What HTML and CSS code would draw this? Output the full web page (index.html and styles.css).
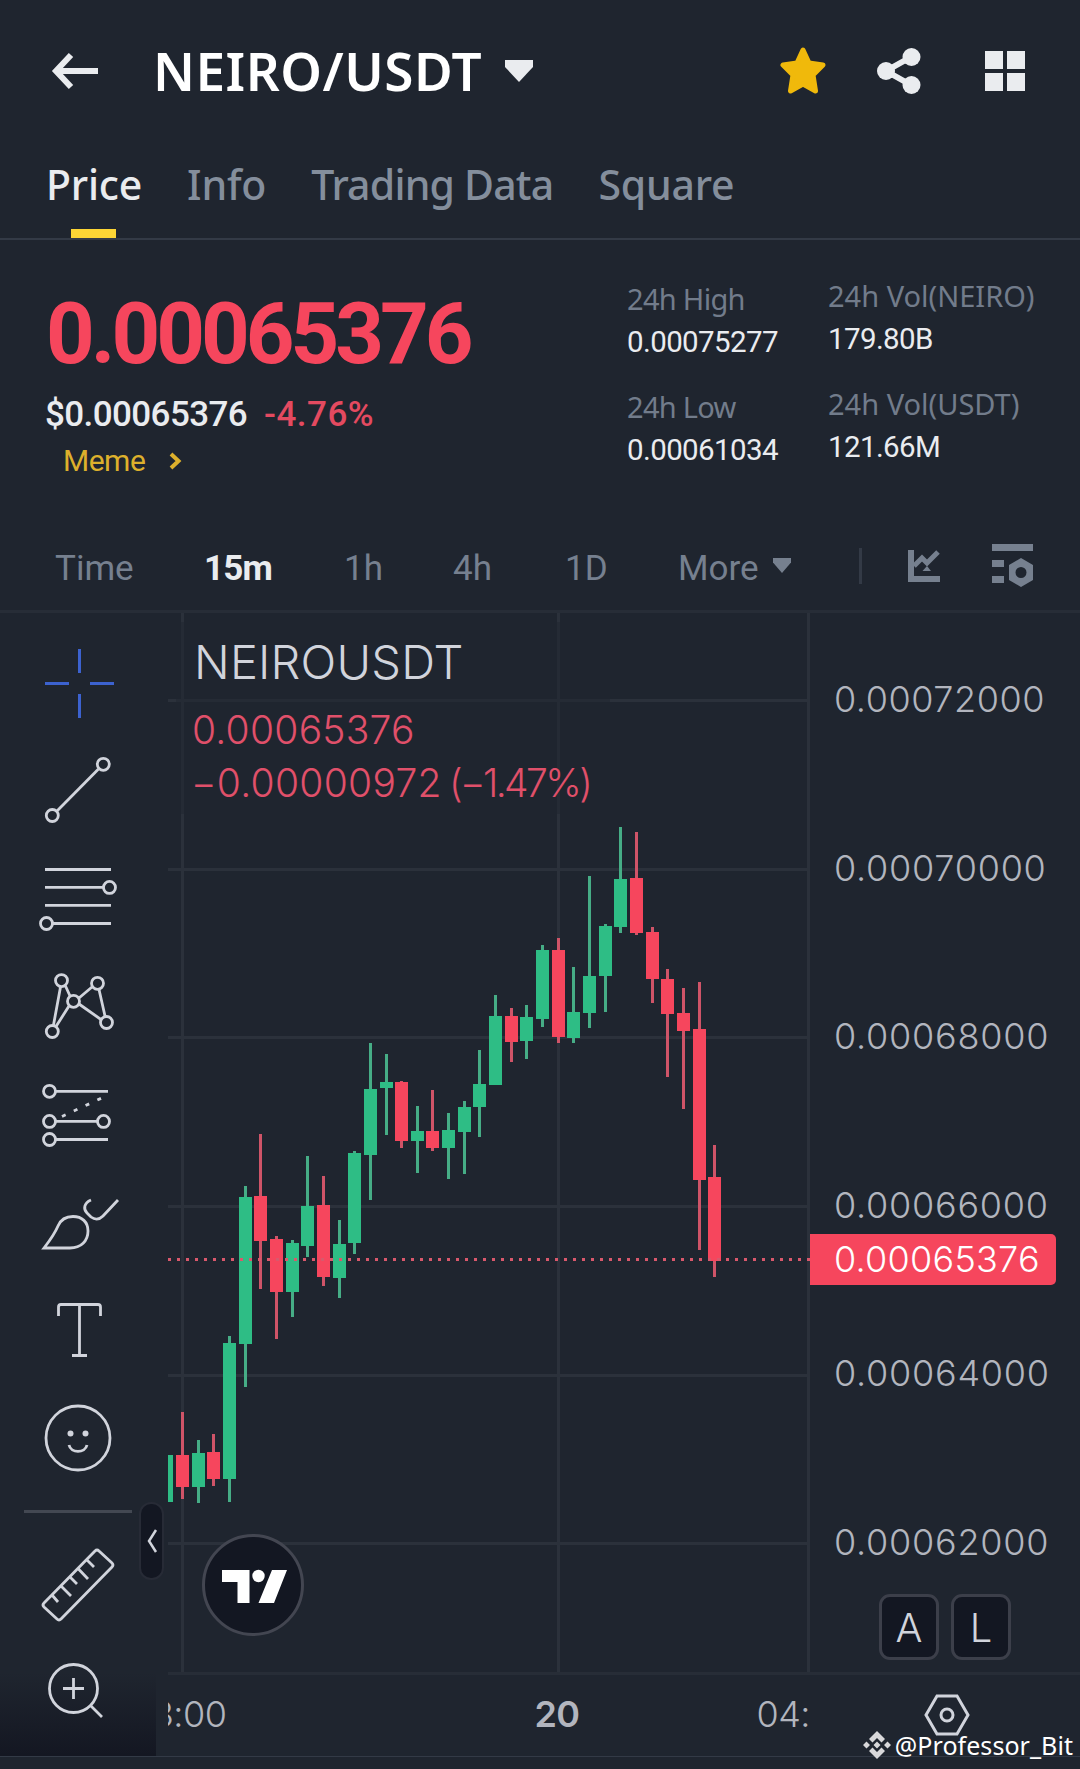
FILE: index.html
```html
<!DOCTYPE html>
<html lang="en">
<head>
    <meta charset="utf-8">
    <meta name="viewport" content="width=device-width, initial-scale=1.0">
    <title>NEIRO/USDT</title>
    <link rel="stylesheet" href="styles.css">
</head>
<body>
    <header class="header">
        <svg class="back" width="48" height="40" viewBox="0 0 48 40"><path d="M47 20H6M20 4L5 20L20 36" /></svg>
        <h1 class="pair">NEIRO/USDT</h1>
        <svg class="caret" width="28" height="22" viewBox="0 0 28 22"><path d="M0 0H28V7L14 22L0 7Z" /></svg>
        <div class="actions">
            <svg width="46" height="48" viewBox="0 0 46 48"><path class="star" d="M23 3L29 16L43 18L33 28L35.500 44L23 37L10.500 44L13 28L3 18L17 16Z" /></svg>
            <svg width="44" height="48" viewBox="0 0 44 48">
                <path class="share-line" d="M34 10L9 24L34 38" />
                <circle cx="34.500" cy="10" r="9" /><circle cx="9" cy="24" r="9" /><circle cx="34.500" cy="38" r="9" />
            </svg>
            <svg width="40" height="40" viewBox="0 0 40 40"><path d="M0 0H18V18H0ZM22 0H40V18H22ZM0 22H18V40H0ZM22 22H40V40H22Z" /></svg>
        </div>
    </header>

    <nav class="tabs">
        <a class="tab active">Price</a>
        <a class="tab info">Info</a>
        <a class="tab trading">Trading Data</a>
        <a class="tab">Square</a>
    </nav>

    <section class="summary">
        <div class="main-price">
            <div class="last">0.00065376</div>
            <div class="fiat"><span>$0.00065376</span><span class="change">-4.76%</span></div>
            <div class="tag">Meme <svg width="14" height="18" viewBox="0 0 14 18"><path d="M3 2L10.500 9L3 16" /></svg></div>
        </div>
        <div class="stats range">
            <div class="stat"><span class="label">24h High</span><span class="value">0.00075277</span></div>
            <div class="stat"><span class="label">24h Low</span><span class="value">0.00061034</span></div>
        </div>
        <div class="stats volume">
            <div class="stat"><span class="label">24h Vol(NEIRO)</span><span class="value">179.80B</span></div>
            <div class="stat"><span class="label">24h Vol(USDT)</span><span class="value">121.66M</span></div>
        </div>
    </section>

    <div class="intervals">
        <span>Time</span>
        <span class="selected">15m</span>
        <span>1h</span>
        <span>4h</span>
        <span>1D</span>
        <span>More</span>
        <svg class="more-caret" width="18" height="15" viewBox="0 0 18 15"><path d="M0 0H18V4.500L9 15L0 4.500Z" /></svg>
        <i class="separator"></i>
        <svg width="34" height="34" viewBox="0 0 34 34">
            <path d="M1 1H7V27H33V33H1Z" />
            <path class="thick" d="M7 17L15 9L20 14L31 3" />
            <path d="M20 17L24 22H15.500Z" />
        </svg>
        <svg width="42" height="44" viewBox="0 0 42 44">
            <path d="M0 0H41V7H0ZM0 16H12V23H0ZM0 32H12V39H0Z" />
            <path fill-rule="evenodd" d="M29 14L41 21V36L29 43L17 36V21ZM29 23A5.500 5.500 0 1 0 29 34A5.500 5.500 0 1 0 29 23Z" />
        </svg>
    </div>

    <main class="chart">
        <aside class="tools">
            <svg class="cross" viewBox="0 0 108 108"><path d="M21 54.500H45M66 54.500H90M55.500 20V44M55.500 65V89" /></svg>
            <svg viewBox="0 0 108 108"><path d="M33 74L74.500 32" /><circle cx="28.300" cy="78.500" r="6" /><circle cx="79.300" cy="27.300" r="6" /></svg>
            <svg viewBox="0 0 108 108"><path d="M21 24.500H87M21 42.400H79M21 60.400H87M29 78.500H87" /><circle cx="85.500" cy="42.400" r="6" /><circle cx="22.500" cy="78.500" r="6" /></svg>
            <svg viewBox="0 0 108 108">
                <path d="M36.500 34L29.500 72M41.500 33L46 43M45 53L32 73.500M55 45L68 34M55 51L77 66.500M75 36.500L81 63" />
                <circle cx="37.500" cy="27.600" r="6" /><circle cx="73.500" cy="30.300" r="6" /><circle cx="49.500" cy="48.300" r="6" /><circle cx="28.300" cy="78.500" r="6" /><circle cx="82.500" cy="69.500" r="6" />
            </svg>
            <svg viewBox="0 0 108 108">
                <path d="M32 30.300H84M32 60.400H73M32 78.500H84" /><path class="dashed" d="M38 55.500L80 36" />
                <circle cx="25.500" cy="30.300" r="6" /><circle cx="25.500" cy="60.400" r="6" /><circle cx="79.500" cy="60.400" r="6" /><circle cx="25.500" cy="78.500" r="6" />
            </svg>
            <svg viewBox="0 0 108 108"><path d="M20 79C27 70 31 64 34 57C37 50 42 47.500 49 47.500C58 47.500 64 53 64 62C64 72 57 79 46 79ZM67 31C60 34 59 40 63 44L67 48C71 51 75 51 79 47L94 31" /></svg>
            <svg viewBox="0 0 108 108"><path d="M34.500 39V30Q34.500 27.500 37 27.500H74Q76.500 27.500 76.500 30V39M55.500 28V78.500M48 78.500H63" /></svg>
            <svg viewBox="0 0 108 108"><circle cx="54" cy="53" r="32" /><circle class="dot" cx="46.500" cy="48.500" r="3" /><circle class="dot" cx="61.500" cy="48.500" r="3" /><path d="M45 60C47 68.500 61 68.500 63 60" /></svg>
            <hr class="tools-divider">
            <svg viewBox="0 0 108 108"><path d="M71 20Q73 18 75 20L88 32Q90 34 88 36L37 88Q35 90 33 88L20 76Q18 74 20 72ZM28 64L34 71M37 55L47 65M46 46L53 53M54 37.500L64 48M63 29L70 36" /></svg>
            <svg viewBox="0 0 108 108"><circle cx="49.500" cy="49.500" r="24" /><path d="M39 49.500H60M49.500 39V60M67 67L78 78" /></svg>
        </aside>

        <div class="plot">
            <svg id="candles" width="642" height="1059" viewBox="168 614 642 1059"></svg>
            <div class="legend">
                <div class="symbol">NEIROUSDT</div>
                <div class="legend-price">0.00065376</div>
                <div class="legend-change">−0.00000972 <span>(−1.47%)</span></div>
            </div>
            <svg class="tv-logo" width="104" height="104" viewBox="0 0 104 104">
                <circle class="ring" cx="52" cy="52" r="49.500" />
                <path d="M21 37H48.500V70H36.500V49H21ZM71 37H86L73 70H57.500Z" /><circle cx="57.500" cy="43" r="6.200" />
            </svg>
        </div>

        <div class="price-axis">
            <span class="narrow">0.00072000</span>
            <span>0.00070000</span>
            <span>0.00068000</span>
            <span>0.00066000</span>
            <span>0.00064000</span>
            <span>0.00062000</span>
            <div class="last-tag">0.00065376</div>
            <div class="scale-buttons"><b>A</b><b>L</b></div>
        </div>

        <div class="time-axis">
            <span class="first">3:00</span>
            <span class="day">20</span>
            <span class="next">04:</span>
        </div>
        <div class="axis-settings">
            <svg width="46" height="42" viewBox="0 0 46 42"><path d="M13 2H33L44 21L33 40H13L2 21Z" /><circle cx="23" cy="21" r="6" /></svg>
        </div>

        <div class="collapse"><svg width="12" height="26" viewBox="0 0 12 26"><path d="M10 2L3 13L10 24" /></svg></div>
    </main>

    <div class="watermark">
        <svg width="28" height="30" viewBox="0 0 28 30"><path d="M14 1L22 9L18.500 12.500L14 8L9.500 12.500L6 9ZM14 29L22 21L18.500 17.500L14 22L9.500 17.500L6 21ZM14 11.500L17.500 15L14 18.500L10.500 15ZM3.500 11.500L7 15L3.500 18.500L0 15ZM24.500 11.500L28 15L24.500 18.500L21 15Z" /></svg>
        <span>@Professor_Bit</span>
    </div>
    <script src="script.js"></script>
</body>
</html>
```
FILE: styles.css
```css
* {
    margin: 0;
    padding: 0;
    box-sizing: border-box;
}

body {
    position: relative;
    width: 1080px;
    height: 1769px;
    overflow: hidden;
    background-color: #1f252f;
    color: #eaecef;
    font-family: 'Noto Sans', sans-serif;
}

svg {
    display: block;
    flex-shrink: 0;
    fill: none;
}

/* Header */
.header {
    display: flex;
    align-items: center;
    height: 141px;
    padding: 0 55px 0 51px;
}

.back path {
    stroke: #eaecef;
    stroke-width: 6;
}

.pair {
    width: 347px;
    margin-left: 54px;
    font-size: 53px;
    font-weight: 600;
    letter-spacing: 0.500px;
    white-space: nowrap;
    color: #fff;
}

.caret {
    margin-left: 5px;
    fill: #eaecef;
}

.actions {
    display: flex;
    align-items: center;
    margin-left: auto;
    fill: #eaecef;
}

.actions svg {
    fill: #eaecef;
}

.actions svg:nth-child(2) {
    margin: 0 64px 0 51px;
}

.actions .star {
    fill: #f0b90b;
    stroke: #f0b90b;
    stroke-width: 5;
    stroke-linejoin: round;
}

.share-line {
    fill: none;
    stroke: #eaecef;
    stroke-width: 6;
}

/* Tabs */
.tabs {
    display: flex;
    height: 99px;
    padding-left: 46px;
    border-bottom: 2px solid #333a46;
}

.tab {
    position: relative;
    margin-right: 45px;
    font-size: 41px;
    font-weight: 500;
    line-height: 86px;
    letter-spacing: -0.200px;
    white-space: nowrap;
    color: #848e9c;
}

.tab.trading {
    letter-spacing: -0.800px;
}

.tab.active {
    color: #eaecef;
}

.tab.active::after {
    content: '';
    position: absolute;
    left: 25px;
    top: 88px;
    width: 45px;
    height: 9px;
    background-color: #fcd535;
}

/* Price and 24h stats */
.summary {
    display: flex;
    height: 285px;
    padding-left: 46px;
}

.main-price {
    width: 581px;
    padding-top: 49px;
    font-family: Roboto, sans-serif;
}

.last {
    font-size: 85px;
    font-weight: 700;
    line-height: 90px;
    letter-spacing: -4px;
    color: #f6465d;
}

.fiat {
    display: flex;
    gap: 17px;
    margin-top: 12px;
    margin-left: -1px;
    font-size: 35px;
    font-weight: 500;
    line-height: 48px;
    letter-spacing: -0.600px;
    color: #eaecef;
}

.change {
    letter-spacing: 0.500px;
    color: #e44a60;
}

.tag {
    display: flex;
    align-items: center;
    gap: 23px;
    padding-left: 17px;
    font-size: 30px;
    line-height: 43px;
    letter-spacing: -0.500px;
    color: #ddb02c;
}

.tag svg {
    stroke: #ddb02c;
    stroke-width: 4;
}

.stats {
    width: 201px;
    padding-top: 38px;
}

.volume {
    width: 240px;
    padding-top: 35px;
}

.stat {
    display: flex;
    flex-direction: column;
    height: 108px;
    white-space: nowrap;
}

.label {
    font-size: 29px;
    line-height: 42px;
    color: #727c8b;
}

.range .label {
    letter-spacing: -0.700px;
}

.value {
    font-family: Roboto, sans-serif;
    font-size: 29.500px;
    line-height: 44px;
    letter-spacing: -0.600px;
}

/* Intervals */
.intervals {
    display: grid;
    grid-template-columns: 149px 140px 109px 112px 113px 95px 86px 48px 85px 42px;
    align-items: center;
    height: 88px;
    padding: 0 0 4px 55px;
    border-bottom: 3px solid #272d37;
    font-family: Roboto, sans-serif;
    font-size: 35px;
    color: #76808f;
}

.intervals span {
    padding-top: 6px;
}

.intervals .selected {
    font-weight: 700;
    letter-spacing: -0.800px;
    color: #eaecef;
}

.intervals svg {
    fill: #76808f;
}

.intervals .thick {
    fill: none;
    stroke: #76808f;
    stroke-width: 5;
}

.separator {
    width: 3px;
    height: 36px;
    background-color: #333a46;
}

/* Chart */
.chart {
    position: relative;
    display: grid;
    grid-template-columns: 168px 642px 270px;
    grid-template-rows: 1059px 84px;
    height: 1144px;
    border-bottom: 1px solid #333a46;
}

.tools {
    grid-row: 1 / 3;
    width: 156px;
    padding: 16px 0 0 24px;
    overflow: hidden;
    background: linear-gradient(transparent 1060px, #141722 1142px);
}

.tools svg {
    width: 108px;
    height: 108px;
    stroke: #d1d4dc;
    stroke-width: 2.800;
}

.tools .cross {
    stroke: #3c62cf;
    stroke-width: 3;
}

.tools .dashed {
    stroke-dasharray: 4 9;
}

.tools .dot {
    fill: #d1d4dc;
    stroke: none;
}

.tools-divider {
    width: 108px;
    height: 3px;
    margin: 17px 0 18px;
    border: none;
    background-color: #434852;
}

.plot {
    position: relative;
}

.legend {
    position: absolute;
    left: 8px;
    top: 9px;
    padding: 4px 20px 8px 15px;
    background-color: rgba(31, 37, 47, 0.500);
    font-family: Inter, sans-serif;
    font-weight: 300;
    white-space: nowrap;
    color: #e0506a;
}

.symbol {
    padding-left: 3px;
    font-size: 47px;
    line-height: 71px;
    letter-spacing: 0.200px;
    color: #d1d4dc;
}

.legend-price {
    margin-top: 3px;
    padding-left: 1px;
    font-size: 39px;
    line-height: 60px;
    letter-spacing: 0.250px;
}

.legend-change {
    font-size: 39px;
    line-height: 46px;
    letter-spacing: 0.300px;
}

.legend-change span {
    margin-left: -4px;
    letter-spacing: -2.600px;
}

.tv-logo {
    position: absolute;
    left: 33px;
    top: 920px;
    fill: #fff;
}

.tv-logo .ring {
    fill: #131722;
    stroke: #434651;
    stroke-width: 3;
}

.price-axis {
    position: relative;
    display: flex;
    flex-direction: column;
    padding: 2px 0 0 24px;
    font-family: Inter, sans-serif;
    font-size: 36px;
    font-weight: 300;
    letter-spacing: 0.750px;
    color: #b2b5be;
}

.price-axis span {
    line-height: 168.600px;
}

.price-axis .narrow {
    letter-spacing: 0.550px;
}

.last-tag {
    position: absolute;
    left: 0;
    top: 621px;
    width: 246px;
    height: 51px;
    padding-left: 24px;
    border-radius: 0 5px 5px 0;
    background-color: #f6465d;
    line-height: 51px;
    letter-spacing: 0.250px;
    color: #fff;
}

.scale-buttons {
    position: absolute;
    left: 69px;
    top: 981px;
    display: flex;
    gap: 12px;
}

.scale-buttons b {
    width: 60px;
    height: 66px;
    border: 3px solid #3c3f4a;
    border-radius: 11px;
    background-color: #131722;
    font-size: 40px;
    font-weight: 300;
    line-height: 61px;
    letter-spacing: 0;
    text-align: center;
    color: #d1d4dc;
}

.time-axis {
    display: flex;
    overflow: hidden;
    border-top: 3px solid #272d37;
    font-family: Inter, sans-serif;
    font-size: 36px;
    font-weight: 300;
    line-height: 78px;
    letter-spacing: -0.500px;
    color: #b2b5be;
}

.first {
    width: 368px;
    margin-left: -16px;
}

.day {
    width: 239px;
    padding-left: 16px;
    font-weight: 600;
}

.axis-settings {
    padding: 19px 0 0 114px;
    border-top: 3px solid #272d37;
}

.axis-settings svg {
    stroke: #d1d4dc;
    stroke-width: 3;
}

.collapse {
    position: absolute;
    left: 139px;
    top: 889px;
    display: flex;
    align-items: center;
    justify-content: center;
    width: 25px;
    height: 78px;
    border: 2px solid #272b36;
    border-radius: 12px;
    background-color: #131722;
}

.collapse svg {
    stroke: #d1d4dc;
    stroke-width: 2.500;
}

.watermark {
    position: absolute;
    right: 7px;
    bottom: 6px;
    display: flex;
    align-items: center;
    gap: 4px;
    font-size: 25px;
    line-height: 36px;
    letter-spacing: 0.050px;
    color: #fff;
}

.watermark svg {
    fill: #d8d8da;
}
```
FILE: script.js
```js
// [color, high, body top, body bottom, low]
const candles = [
    ['g', 1455, 1455, 1502, 1502],
    ['r', 1412, 1455, 1487, 1499],
    ['g', 1440, 1453, 1487, 1503],
    ['r', 1434, 1452, 1479, 1486],
    ['g', 1336, 1343, 1479, 1502],
    ['g', 1186, 1197, 1344, 1387],
    ['r', 1134, 1196, 1241, 1289],
    ['r', 1236, 1239, 1292, 1339],
    ['g', 1240, 1243, 1292, 1317],
    ['g', 1156, 1206, 1246, 1257],
    ['r', 1176, 1205, 1277, 1286],
    ['g', 1220, 1244, 1278, 1298],
    ['g', 1151, 1153, 1243, 1254],
    ['g', 1043, 1089, 1155, 1200],
    ['g', 1054, 1082, 1088, 1135],
    ['r', 1081, 1082, 1141, 1148],
    ['g', 1106, 1131, 1141, 1173],
    ['r', 1090, 1131, 1148, 1151],
    ['g', 1113, 1130, 1148, 1179],
    ['g', 1101, 1107, 1132, 1174],
    ['g', 1050, 1084, 1107, 1137],
    ['g', 995, 1016, 1085, 1085],
    ['r', 1008, 1016, 1042, 1062],
    ['g', 1005, 1017, 1041, 1059],
    ['g', 945, 950, 1019, 1027],
    ['r', 938, 950, 1037, 1043],
    ['g', 967, 1012, 1038, 1043],
    ['g', 876, 976, 1013, 1028],
    ['g', 924, 926, 976, 1012],
    ['g', 827, 879, 927, 933],
    ['r', 832, 878, 933, 935],
    ['r', 927, 932, 979, 1003],
    ['r', 969, 979, 1014, 1077],
    ['r', 988, 1013, 1031, 1109],
    ['r', 982, 1029, 1180, 1250],
    ['r', 1145, 1177, 1261, 1277]
];

const bodyColor = { g: '#2ebd85', r: '#f6465d' };
const wickColor = { g: '#46ad86', r: '#cf5468' };
const gridColor = '#2b313b';

const svg = document.getElementById('candles');

// The plot starts 613px down the page
svg.setAttribute('viewBox', '168 613 642 1059');

function addRect(x, y, width, height, fill) {
    const rect = document.createElementNS('http://www.w3.org/2000/svg', 'rect');
    rect.setAttribute('x', x);
    rect.setAttribute('y', y);
    rect.setAttribute('width', width);
    rect.setAttribute('height', height);
    rect.setAttribute('fill', fill);
    svg.appendChild(rect);
}

// Grid
[699, 868, 1036, 1205, 1374, 1542].forEach(function(y) {
    addRect(168, y, 642, 3, gridColor);
});
[181, 557, 807].forEach(function(x) {
    addRect(x, 613, 3, 1059, gridColor);
});

candles.forEach(function(candle, i) {
    const x = Math.round(175.92 + (i - 1) * 15.66);
    addRect(x + 5, candle[1], 3, candle[4] - candle[1], wickColor[candle[0]]);
    addRect(x, candle[2], 13, candle[3] - candle[2], bodyColor[candle[0]]);
});

// Current price line
for (let x = 168; x < 810; x += 9) {
    addRect(x, 1258, 3, 3, '#d9586c');
}
```
